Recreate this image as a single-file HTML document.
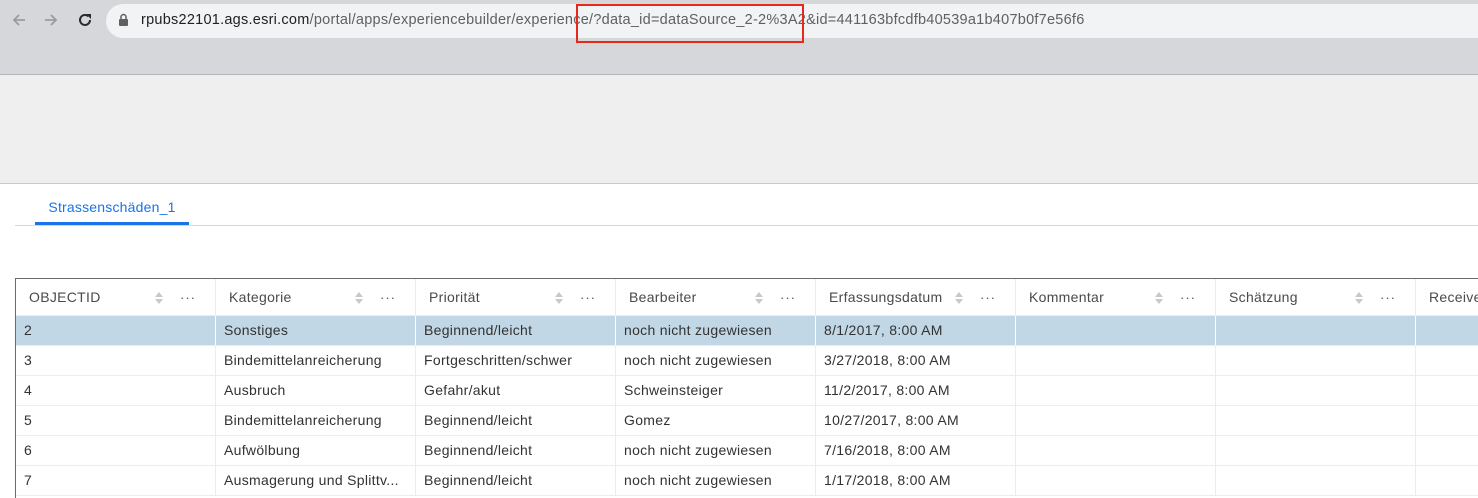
<!DOCTYPE html>
<html><head><meta charset="utf-8"><style>
*{margin:0;padding:0;box-sizing:border-box}
body{width:1478px;height:493px;overflow:hidden;background:#fff;font-family:"Liberation Sans",sans-serif;position:relative}
.chrome{position:absolute;left:0;top:0;width:1478px;height:75px;background:#d6d7db;border-bottom:1px solid #b4b5b8}
.url{position:absolute;left:106px;top:4px;width:1390px;height:34px;border-radius:17px;background:#f2f3f5}
.urltxt{position:absolute;left:141px;top:12px;font-size:14.5px;color:#5f6064;white-space:nowrap;letter-spacing:0.25px}
.urltxt b{font-weight:normal;color:#202124}
.red{position:absolute;left:576px;top:4px;width:228px;height:39px;border:2px solid #e8281a}
.gray{position:absolute;left:0;top:75px;width:1478px;height:109px;background:#efefef;border-bottom:1px solid #c9c9c9}
.tab{position:absolute;left:35px;top:199px;width:154px;text-align:center;font-size:14px;color:#1a73e8;letter-spacing:0.2px}
.tabline{position:absolute;left:35px;top:222px;width:154px;height:3px;background:#1a73e8}
.sep{position:absolute;left:15px;top:225px;width:1463px;height:1px;background:#d6d6d6}
.tbl{position:absolute;left:15px;top:278px;width:1470px;height:220px;border:1px solid #6b6b6b;border-bottom:none;border-right:none;overflow:hidden}
.row{position:absolute;left:0;height:30px;width:1470px;border-bottom:1px solid #ececec}
.c{position:absolute;top:0;height:100%;width:200px;border-right:1px solid #ececec;font-size:14px;letter-spacing:0.3px;color:#323232;padding-left:8px;line-height:29px;white-space:nowrap}
.h .c{padding-left:13px;color:#4a4a4a;line-height:37px}
.sort{position:absolute;left:139px;top:13px;width:8px}
.sort:before{content:"";position:absolute;left:0;top:0;border:4px solid transparent;border-bottom:5px solid #c8c8c8;border-top:none}
.sort:after{content:"";position:absolute;left:0;top:7px;border:4px solid transparent;border-top:5px solid #c8c8c8;border-bottom:none}
.dots{position:absolute;left:164px;top:0;font-size:13px;color:#555;letter-spacing:1px}
.sel{background:#c1d7e5}
.sel .c{border-right-color:#fff}
</style></head><body>
<div class="chrome">
<svg style="position:absolute;left:10px;top:11px" width="18" height="18" viewBox="0 0 18 18"><path d="M15 9H4M9 4L4 9l5 5" stroke="#9a9ba0" stroke-width="1.8" fill="none"/></svg>
<svg style="position:absolute;left:42px;top:11px" width="18" height="18" viewBox="0 0 18 18"><path d="M3 9h11M9 4l5 5-5 5" stroke="#9a9ba0" stroke-width="1.8" fill="none"/></svg>
<svg style="position:absolute;left:76px;top:11px" width="18" height="18" viewBox="0 0 18 18"><path d="M14 9a5 5 0 1 1-1.5-3.6" stroke="#2a2a2d" stroke-width="2" fill="none"/><path d="M10 3h5v5z" fill="#2a2a2d"/></svg>
<div class="url"></div>
<svg style="position:absolute;left:118px;top:13px" width="11" height="14" viewBox="0 0 11 14"><rect x="1" y="6" width="9" height="7" rx="1" fill="#5f6064"/><path d="M3 6V4a2.5 2.5 0 0 1 5 0v2" stroke="#5f6064" stroke-width="1.5" fill="none"/></svg>
<div class="urltxt"><b>rpubs22101.ags.esri.com</b>/portal/apps/experiencebuilder/experience/?data_id=dataSource_2-2%3A2&amp;id=441163bfcdfb40539a1b407b0f7e56f6</div>
</div>
<div class="red"></div>
<div class="gray"></div>
<div class="tab">Strassenschäden_1</div>
<div class="tabline"></div>
<div class="sep"></div>
<div class="tbl">
<div class="row h" style="top:0;height:37px">
<div class="c" style="left:0">OBJECTID<span class="sort"></span><span class="dots">···</span></div>
<div class="c" style="left:200px">Kategorie<span class="sort"></span><span class="dots">···</span></div>
<div class="c" style="left:400px">Priorität<span class="sort"></span><span class="dots">···</span></div>
<div class="c" style="left:600px">Bearbeiter<span class="sort"></span><span class="dots">···</span></div>
<div class="c" style="left:800px">Erfassungsdatum<span class="sort"></span><span class="dots">···</span></div>
<div class="c" style="left:1000px">Kommentar<span class="sort"></span><span class="dots">···</span></div>
<div class="c" style="left:1200px">Schätzung<span class="sort"></span><span class="dots">···</span></div>
<div class="c" style="left:1400px">Received</div>
</div>
<div class="row sel" style="top:37px"><div class="c" style="left:0">2</div><div class="c" style="left:200px">Sonstiges</div><div class="c" style="left:400px">Beginnend/leicht</div><div class="c" style="left:600px">noch nicht zugewiesen</div><div class="c" style="left:800px">8/1/2017, 8:00 AM</div><div class="c" style="left:1000px"></div><div class="c" style="left:1200px"></div><div class="c" style="left:1400px"></div></div>
<div class="row" style="top:67px"><div class="c" style="left:0">3</div><div class="c" style="left:200px">Bindemittelanreicherung</div><div class="c" style="left:400px">Fortgeschritten/schwer</div><div class="c" style="left:600px">noch nicht zugewiesen</div><div class="c" style="left:800px">3/27/2018, 8:00 AM</div><div class="c" style="left:1000px"></div><div class="c" style="left:1200px"></div><div class="c" style="left:1400px"></div></div>
<div class="row" style="top:97px"><div class="c" style="left:0">4</div><div class="c" style="left:200px">Ausbruch</div><div class="c" style="left:400px">Gefahr/akut</div><div class="c" style="left:600px">Schweinsteiger</div><div class="c" style="left:800px">11/2/2017, 8:00 AM</div><div class="c" style="left:1000px"></div><div class="c" style="left:1200px"></div><div class="c" style="left:1400px"></div></div>
<div class="row" style="top:127px"><div class="c" style="left:0">5</div><div class="c" style="left:200px">Bindemittelanreicherung</div><div class="c" style="left:400px">Beginnend/leicht</div><div class="c" style="left:600px">Gomez</div><div class="c" style="left:800px">10/27/2017, 8:00 AM</div><div class="c" style="left:1000px"></div><div class="c" style="left:1200px"></div><div class="c" style="left:1400px"></div></div>
<div class="row" style="top:157px"><div class="c" style="left:0">6</div><div class="c" style="left:200px">Aufwölbung</div><div class="c" style="left:400px">Beginnend/leicht</div><div class="c" style="left:600px">noch nicht zugewiesen</div><div class="c" style="left:800px">7/16/2018, 8:00 AM</div><div class="c" style="left:1000px"></div><div class="c" style="left:1200px"></div><div class="c" style="left:1400px"></div></div>
<div class="row" style="top:187px"><div class="c" style="left:0">7</div><div class="c" style="left:200px">Ausmagerung und Splittv...</div><div class="c" style="left:400px">Beginnend/leicht</div><div class="c" style="left:600px">noch nicht zugewiesen</div><div class="c" style="left:800px">1/17/2018, 8:00 AM</div><div class="c" style="left:1000px"></div><div class="c" style="left:1200px"></div><div class="c" style="left:1400px"></div></div>
</div>
</body></html>
